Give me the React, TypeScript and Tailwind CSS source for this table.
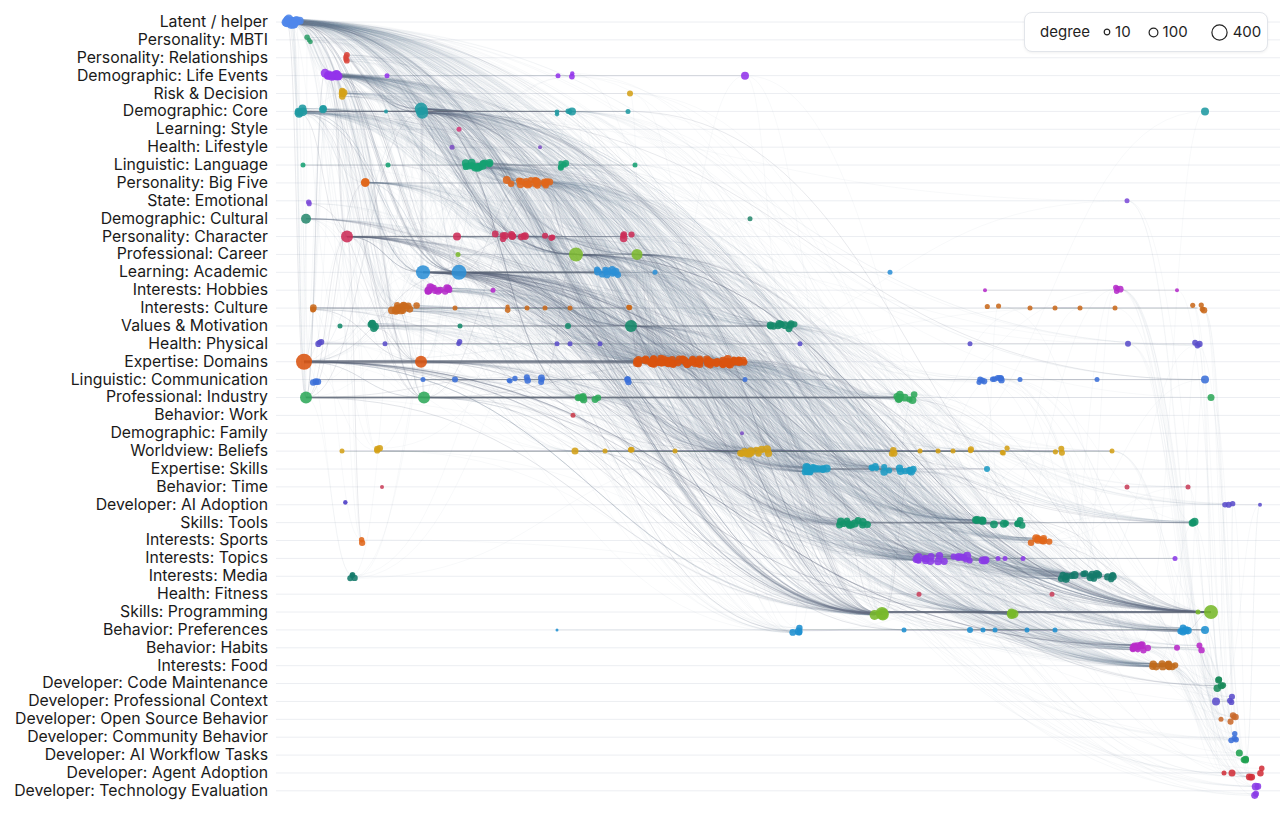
import { useMemo } from "react";

const TOP = 22;
const ROW_H = 17.88;

// [x, count, spread, radius]
type Cl = [number, number, number, number];
type Row = { label: string; color: string; cl: Cl[] };

const ROWS: Row[] = [
  { label: "Latent / helper", color: "#4f86ea", cl: [[285, 14, 15, 4.5]] },
  { label: "Personality: MBTI", color: "#2f9e6a", cl: [[307, 3, 4, 2.5]] },
  { label: "Personality: Relationships", color: "#d9453a", cl: [[343, 4, 6, 3]] },
  { label: "Demographic: Life Events", color: "#9333ea", cl: [[323, 14, 16, 4], [387, 1, 0, 2.5], [558, 1, 0, 2.5], [568, 2, 6, 2.5], [745, 1, 0, 4]] },
  { label: "Risk & Decision", color: "#d4a017", cl: [[339, 4, 5, 3.5], [630, 1, 0, 3]] },
  { label: "Demographic: Core", color: "#1f9aa2", cl: [[298, 5, 6, 4], [322, 2, 2, 3.5], [386, 1, 0, 2], [421, 2, 2, 5.5], [557, 2, 0, 2.5], [568, 2, 4, 3], [572, 1, 0, 4], [628, 1, 0, 2.5], [1205, 1, 0, 4]] },
  { label: "Learning: Style", color: "#d63a7a", cl: [[459, 1, 0, 2.5]] },
  { label: "Health: Lifestyle", color: "#7c4dc4", cl: [[452, 1, 0, 2.5], [540, 1, 0, 2]] },
  { label: "Linguistic: Language", color: "#16a072", cl: [[303, 1, 0, 2.5], [388, 1, 0, 2.5], [462, 20, 28, 3.5], [560, 5, 10, 3], [635, 1, 0, 2.5]] },
  { label: "Personality: Big Five", color: "#e0661a", cl: [[365, 2, 3, 4.5], [498, 22, 52, 3.5]] },
  { label: "State: Emotional", color: "#7d4cd8", cl: [[308, 2, 2, 2.5], [1127, 1, 0, 2.5]] },
  { label: "Demographic: Cultural", color: "#2a8a70", cl: [[306, 1, 0, 5], [750, 1, 0, 2.5]] },
  { label: "Personality: Character", color: "#cc2d58", cl: [[347, 1, 0, 6], [457, 1, 0, 4], [493, 10, 35, 3.5], [545, 3, 8, 3], [623, 4, 10, 3.5]] },
  { label: "Professional: Career", color: "#7cb82f", cl: [[458, 1, 0, 2.5], [576, 1, 0, 7], [637, 1, 0, 5.5]] },
  { label: "Learning: Academic", color: "#2c8fd6", cl: [[423, 1, 0, 7], [459, 1, 0, 7.5], [597, 12, 24, 3.5], [655, 1, 0, 2.5], [890, 1, 0, 2.5]] },
  { label: "Interests: Hobbies", color: "#b52cc9", cl: [[425, 14, 25, 3.5], [493, 1, 0, 2.5], [985, 1, 0, 2], [1115, 4, 10, 3], [1177, 1, 0, 2]] },
  { label: "Interests: Culture", color: "#c96a1c", cl: [[312, 3, 2, 3], [390, 14, 28, 3.5], [455, 1, 0, 2.5], [505, 2, 8, 2.5], [527, 1, 0, 2.5], [545, 1, 0, 2.5], [570, 1, 0, 2.5], [628, 3, 4, 2.5], [970, 2, 30, 3], [1030, 1, 0, 2.5], [1055, 1, 0, 2.5], [1080, 1, 0, 2.5], [1115, 1, 0, 2.5], [1190, 4, 15, 3]] },
  { label: "Values & Motivation", color: "#148a6a", cl: [[340, 1, 0, 2.5], [370, 5, 8, 3.5], [460, 1, 0, 2.5], [568, 1, 0, 3], [631, 1, 0, 6], [770, 12, 25, 3.5]] },
  { label: "Health: Physical", color: "#5a4dc9", cl: [[318, 3, 4, 3], [385, 1, 0, 2.5], [455, 2, 5, 2.5], [557, 1, 0, 2.5], [570, 1, 0, 2.5], [600, 1, 0, 2.5], [800, 1, 0, 2.5], [970, 1, 0, 2.5], [1128, 1, 0, 3], [1195, 3, 6, 3]] },
  { label: "Expertise: Domains", color: "#d9530f", cl: [[304, 1, 0, 8], [421, 1, 0, 6], [636, 90, 108, 3.5], [745, 1, 0, 2.5]] },
  { label: "Linguistic: Communication", color: "#3b6fd8", cl: [[313, 3, 5, 3], [423, 1, 0, 2.5], [455, 1, 0, 3], [505, 3, 12, 2.5], [525, 4, 20, 3], [542, 1, 0, 2.5], [625, 3, 4, 3], [745, 1, 0, 2.5], [975, 10, 30, 3], [1020, 1, 0, 2.5], [1097, 1, 0, 2.5], [1205, 1, 0, 4]] },
  { label: "Professional: Industry", color: "#2fa85a", cl: [[306, 1, 0, 6], [424, 1, 0, 6], [576, 8, 22, 3.5], [886, 10, 30, 3.5], [1211, 1, 0, 3.5]] },
  { label: "Behavior: Work", color: "#c93b4a", cl: [[573, 1, 0, 2.5]] },
  { label: "Demographic: Family", color: "#7c4dc4", cl: [[742, 1, 0, 2]] },
  { label: "Worldview: Beliefs", color: "#d4a017", cl: [[342, 1, 0, 2.5], [377, 3, 3, 3.5], [575, 1, 0, 3.5], [605, 1, 0, 2.5], [628, 2, 4, 3], [675, 1, 0, 2.5], [740, 12, 30, 3.5], [888, 3, 8, 3], [920, 1, 0, 2.5], [938, 1, 0, 2.5], [953, 1, 0, 2.5], [968, 2, 6, 3], [1000, 3, 8, 3], [1055, 3, 8, 3], [1112, 1, 0, 2.5]] },
  { label: "Expertise: Skills", color: "#1c9bc4", cl: [[800, 14, 38, 3.5], [871, 4, 6, 3], [884, 10, 30, 3.5], [987, 1, 0, 3]] },
  { label: "Behavior: Time", color: "#c83f5a", cl: [[382, 1, 0, 2], [1127, 1, 0, 2.5], [1188, 1, 0, 2.5]] },
  { label: "Developer: AI Adoption", color: "#5b4dcb", cl: [[345, 2, 2, 2], [1225, 3, 8, 3], [1260, 1, 0, 2]] },
  { label: "Skills: Tools", color: "#12946a", cl: [[838, 12, 32, 3.5], [975, 12, 50, 3.5], [1192, 3, 3, 3.5]] },
  { label: "Interests: Sports", color: "#e0661a", cl: [[361, 2, 2, 3], [1026, 8, 24, 3.5]] },
  { label: "Interests: Topics", color: "#8a3ae6", cl: [[916, 22, 54, 3.5], [982, 3, 4, 3.5], [998, 1, 0, 2.5], [1005, 1, 0, 2.5], [1023, 1, 0, 2.5], [1175, 1, 0, 2.5]] },
  { label: "Interests: Media", color: "#137a6a", cl: [[349, 4, 6, 3], [1060, 18, 55, 3.5]] },
  { label: "Health: Fitness", color: "#c83f5a", cl: [[919, 1, 0, 2.5], [1052, 1, 0, 2.5]] },
  { label: "Skills: Programming", color: "#78b82a", cl: [[870, 3, 14, 5.5], [1010, 3, 10, 5], [1198, 1, 0, 2.5], [1211, 1, 0, 7]] },
  { label: "Behavior: Preferences", color: "#1e8fd0", cl: [[557, 1, 0, 1.5], [790, 4, 10, 3.5], [904, 1, 0, 2.5], [970, 1, 0, 3], [983, 1, 0, 2.5], [995, 1, 0, 2.5], [1027, 1, 0, 2.5], [1055, 1, 0, 2.5], [1177, 5, 16, 3.5], [1205, 1, 0, 4]] },
  { label: "Behavior: Habits", color: "#b82ac8", cl: [[1128, 10, 20, 3.5], [1177, 1, 0, 3], [1198, 2, 4, 3]] },
  { label: "Interests: Food", color: "#c06a1a", cl: [[1148, 12, 28, 3.5]] },
  { label: "Developer: Code Maintenance", color: "#1a8a5a", cl: [[1217, 5, 8, 3.5]] },
  { label: "Developer: Professional Context", color: "#5b4dcb", cl: [[1216, 1, 0, 4], [1226, 3, 6, 3]] },
  { label: "Developer: Open Source Behavior", color: "#c96a2c", cl: [[1221, 1, 0, 2.5], [1230, 4, 9, 3]] },
  { label: "Developer: Community Behavior", color: "#3b6fd8", cl: [[1231, 4, 9, 3]] },
  { label: "Developer: AI Workflow Tasks", color: "#1fa050", cl: [[1239, 4, 7, 3.5]] },
  { label: "Developer: Agent Adoption", color: "#d1303a", cl: [[1224, 1, 0, 2.5], [1232, 1, 0, 3.5], [1248, 3, 8, 3], [1260, 2, 2, 3]] },
  { label: "Developer: Technology Evaluation", color: "#8a3ae6", cl: [[1254, 4, 4, 3.5]] },
];

type Node = { x: number; y: number; r: number; row: number; color: string; w: number };

function mulberry(seed: number) {
  let a = seed;
  return () => {
    a |= 0;
    a = (a + 0x6d2b79f5) | 0;
    let t = Math.imul(a ^ (a >>> 15), 1 | a);
    t = (t + Math.imul(t ^ (t >>> 7), 61 | t)) ^ t;
    return ((t ^ (t >>> 14)) >>> 0) / 4294967296;
  };
}

const curve = (a: { x: number; y: number }, b: { x: number; y: number }) => {
  const h = (b.x - a.x) * 0.5;
  return `M${a.x.toFixed(1)} ${a.y.toFixed(1)}C${(a.x + h).toFixed(1)} ${a.y.toFixed(1)} ${(b.x - h).toFixed(1)} ${b.y.toFixed(1)} ${b.x.toFixed(1)} ${b.y.toFixed(1)}`;
};

function build() {
  const rand = mulberry(11);
  const nodes: Node[] = [];
  const anchors: { x: number; y: number; w: number; row: number }[] = [];

  ROWS.forEach((row, i) => {
    const y = TOP + i * ROW_H;
    const dev = i >= 37;
    row.cl.forEach(([x, n, w, r]) => {
      anchors.push({ x: x + w / 2, y, w: n * r ** 4, row: i });
      for (let k = 0; k < n; k++) {
        const nx = n === 1 ? x : x + rand() * w;
        const ny = n === 1 ? y : y + (rand() - 0.5) * (dev ? 10 : 6);
        const nr = n === 1 ? r : r * (0.85 + rand() * 0.3);
        // the developer block is only weakly linked to the rest
        nodes.push({ x: nx, y: ny, r: nr, row: i, color: row.color, w: nr ** 4 * (dev ? 0.12 : 1) });
      }
    });
  });

  const total = nodes.reduce((s, n) => s + n.w, 0);
  const cum: number[] = [];
  let acc = 0;
  nodes.forEach((n) => {
    acc += n.w;
    cum.push(acc);
  });
  const pick = () => {
    const v = rand() * total;
    let lo = 0;
    let hi = cum.length - 1;
    while (lo < hi) {
      const mid = (lo + hi) >> 1;
      if (cum[mid] < v) lo = mid + 1;
      else hi = mid;
    }
    return nodes[lo];
  };

  // cross-row edges, biased along the top-left → bottom-right diagonal
  const faint: string[] = [];
  const mid: string[] = [];
  let tries = 0;
  while ((faint.length < 2800 || mid.length < 320) && tries < 300000) {
    tries++;
    let s = pick();
    let t = pick();
    if (s.row === t.row) continue;
    if (s.row > t.row) [s, t] = [t, s];
    const ratio = (t.x - s.x) / (t.y - s.y);
    const p = Math.max(0.04, Math.exp(-((ratio - 1.5) ** 2) / 2.8));
    if (rand() > p) continue;
    const d = curve(s, t);
    if ((s.r >= 5 || t.r >= 5) && mid.length < 320 && rand() < 0.45) mid.push(d);
    else if (faint.length < 2800) faint.push(d);
  }

  // developer block hangs off the right-hand column
  const dev = nodes.filter((n) => n.row >= 37);
  const right = nodes.filter((n) => n.row < 37 && n.x > 1100);
  for (let k = 0; k < 90; k++) {
    const a = right[Math.floor(rand() * right.length)];
    const b = dev[Math.floor(rand() * dev.length)];
    faint.push(curve(a, b));
  }

  // same-row links
  const bundles: { d: string; width: number; op: number }[] = [];
  for (let i = 0; i < anchors.length; i++) {
    for (let j = i + 1; j < anchors.length; j++) {
      const a = anchors[i];
      const b = anchors[j];
      if (a.row !== b.row) continue;
      const m = Math.min(a.w, b.w);
      if (Math.abs(b.x - a.x) > 380 && m < 1000) continue;
      const width = Math.min(3.6, 0.5 + m / 1400);
      const op = Math.min(0.6, 0.12 + m / 4000);
      bundles.push({ d: `M${a.x} ${a.y}L${b.x} ${b.y}`, width, op });
    }
  }

  return { nodes, faint, mid, bundles };
}

function Legend() {
  return (
    <div className="absolute left-[1024px] top-[12px] flex h-[40px] w-[244px] items-center rounded-lg border border-[#e2e5ea] bg-white pl-[15px] text-[15px] text-[#1f1f1f] shadow-[0_1px_3px_rgba(0,0,0,0.06)]">
      <span>degree</span>
      <span className="ml-[13px] flex items-center gap-[4px]">
        <svg width="8" height="8" viewBox="0 0 8 8">
          <circle cx="4" cy="4" r="2.8" fill="none" stroke="#222" strokeWidth="1.2" />
        </svg>
        10
      </span>
      <span className="ml-[17px] flex items-center gap-[4px]">
        <svg width="11" height="11" viewBox="0 0 11 11">
          <circle cx="5.5" cy="5.5" r="4.4" fill="none" stroke="#222" strokeWidth="1.2" />
        </svg>
        100
      </span>
      <span className="ml-[23px] flex items-center gap-[5px]">
        <svg width="17" height="17" viewBox="0 0 17 17">
          <circle cx="8.5" cy="8.5" r="7.6" fill="none" stroke="#222" strokeWidth="1.2" />
        </svg>
        400
      </span>
    </div>
  );
}

export default function App() {
  const { nodes, faint, mid, bundles } = useMemo(build, []);

  return (
    <div className="relative flex h-[814px] w-[1280px] overflow-hidden bg-white font-['Inter','Noto_Sans',sans-serif]">
      <div className="flex w-[272px] flex-none flex-col pt-[13px] pr-[4px] text-right text-[15.8px] leading-[17.88px] text-[#1a1a1a]">
        {ROWS.map((r) => (
          <div key={r.label} className="h-[17.88px] whitespace-nowrap">
            {r.label}
          </div>
        ))}
      </div>

      <svg width={1008} height={814} viewBox="272 0 1008 814" className="flex-none">
        {ROWS.map((r, i) => (
          <line key={r.label} x1={276} x2={1280} y1={TOP + i * ROW_H} y2={TOP + i * ROW_H} stroke="#eceef2" strokeWidth={1} />
        ))}
        <g fill="none" stroke="#747e90" strokeWidth={0.7} strokeOpacity={0.07}>
          {faint.map((d, i) => (
            <path key={i} d={d} />
          ))}
        </g>
        <g fill="none" stroke="#606a7c" strokeWidth={0.8} strokeOpacity={0.18}>
          {mid.map((d, i) => (
            <path key={i} d={d} />
          ))}
        </g>
        <g fill="none" stroke="#5a6374">
          {bundles.map((b, i) => (
            <path key={i} d={b.d} strokeWidth={b.width} strokeOpacity={b.op} />
          ))}
        </g>
        <g>
          {nodes.map((n, i) => (
            <circle key={i} cx={n.x} cy={n.y} r={n.r} fill={n.color} fillOpacity={0.88} />
          ))}
        </g>
      </svg>

      <Legend />
    </div>
  );
}
